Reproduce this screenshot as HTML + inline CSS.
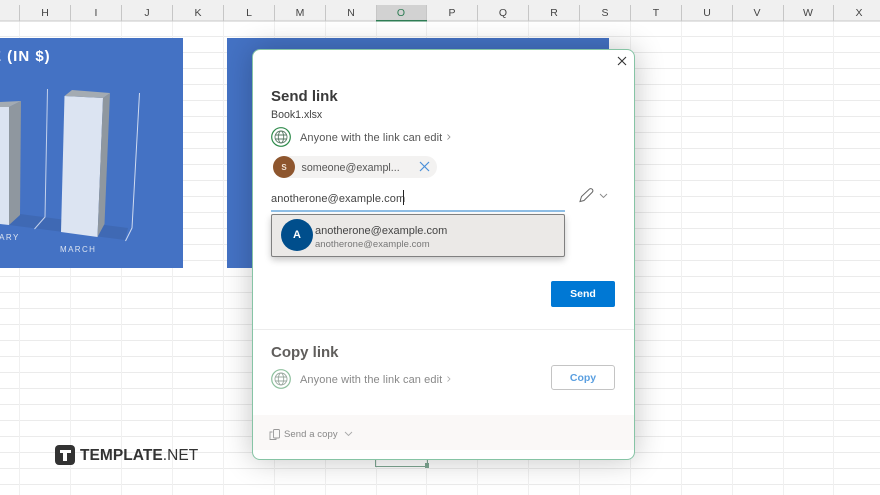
<!DOCTYPE html>
<html><head><meta charset="utf-8"><style>
html,body{margin:0;padding:0;background:#fff}
#p{position:relative;width:880px;height:495px;overflow:hidden;background:#fff;font-family:"Liberation Sans",sans-serif;filter:blur(.35px)}
.a{position:absolute;white-space:nowrap}
.h{position:absolute;top:5px;height:16px;line-height:17px;font-size:10.5px;color:#444;width:20px;text-align:center}
</style></head><body><div id="p">
<svg class="a" style="left:0;top:0" width="880" height="495">
<rect x="0" y="0" width="880" height="21" fill="#f0f0f0"/>
<rect x="376" y="5" width="51" height="16" fill="#d2d2d2"/>
<g stroke="#ebebeb" stroke-width="1">
<path d="M0 36.500H880M0 52.500H880M0 68.500H880M0 84.500H880M0 100.500H880M0 116.500H880M0 132.500H880M0 148.500H880M0 164.500H880M0 180.500H880M0 196.500H880M0 212.500H880M0 228.500H880M0 244.500H880M0 260.500H880M0 276.500H880M0 292.500H880M0 308.500H880M0 324.500H880M0 340.500H880M0 356.500H880M0 372.500H880M0 388.500H880M0 404.500H880M0 420.500H880M0 436.500H880M0 452.500H880M0 468.500H880M0 484.500H880"/>
</g>
<g stroke="#f0f0f0" stroke-width="1">
<path d="M19.500 21V495M70.500 21V495M121.500 21V495M172.500 21V495M223.500 21V495M274.500 21V495M325.500 21V495M376.500 21V495M426.500 21V495M477.500 21V495M528.500 21V495M579.500 21V495M630.500 21V495M681.500 21V495M732.500 21V495M783.500 21V495M833.500 21V495"/>
</g>
<g stroke="#c6c6c6" stroke-width="1"><path d="M19.500 5V21M70.500 5V21M121.500 5V21M172.500 5V21M223.500 5V21M274.500 5V21M325.500 5V21M376.500 5V21M426.500 5V21M477.500 5V21M528.500 5V21M579.500 5V21M630.500 5V21M681.500 5V21M732.500 5V21M783.500 5V21M833.500 5V21"/></g>
<rect x="0" y="20.500" width="880" height="1" fill="#c8c8c8"/>
<rect x="376" y="20" width="51" height="1.500" fill="#2f7d55"/>
<rect x="0" y="38" width="183" height="230" fill="#4472c4"/>
<rect x="227" y="38" width="382" height="230" fill="#4472c4"/>
<path d="M20 214L128 228 125 240 9 225Z" fill="#3f69b4"/>
<path d="M0 106H9V225L0 224Z" fill="#dbe3f1"/>
<path d="M9 107L21 101 20 215 9 225Z" fill="#8f979f"/>
<path d="M0 102L21 101 9 107H0Z" fill="#a4abb2"/>
<path d="M64.500 96L103 98 97.500 237 61 232Z" fill="#dce4f2"/>
<path d="M103 98L110 93 104.500 224 97.500 237Z" fill="#8f979f"/>
<path d="M64.500 96L72 90 110 93 103 98Z" fill="#a4abb2"/>
<path d="M47.500 89L45 217 34.500 229" fill="none" stroke="#c3d1ec" stroke-width="1"/>
<path d="M139.500 93L132 228 125.500 241" fill="none" stroke="#d0dbf0" stroke-width="1"/>
</svg>
<div class="h" style="left:35px">H</div><div class="h" style="left:86px">I</div><div class="h" style="left:137px">J</div><div class="h" style="left:188px">K</div><div class="h" style="left:239px">L</div><div class="h" style="left:290px">M</div><div class="h" style="left:341px">N</div><div class="h" style="left:391px;color:#2f7d55">O</div><div class="h" style="left:442px">P</div><div class="h" style="left:493px">Q</div><div class="h" style="left:544px">R</div><div class="h" style="left:595px">S</div><div class="h" style="left:646px">T</div><div class="h" style="left:697px">U</div><div class="h" style="left:747px">V</div><div class="h" style="left:798px">W</div><div class="h" style="left:849px">X</div>
<div class="a" style="left:-9px;top:48px;font-size:15px;font-weight:bold;color:#fff;letter-spacing:1px">E (IN $)</div>
<div class="a" style="left:-8px;top:233px;font-size:8px;color:#dbe3f1;letter-spacing:1.4px">UARY</div>
<div class="a" style="left:60px;top:244.500px;font-size:8px;color:#dbe3f1;letter-spacing:1.4px">MARCH</div>
<div class="a" style="left:375px;top:440px;width:51px;height:25px;border:1px solid #7ea792"></div>
<div class="a" style="left:425px;top:463px;width:4px;height:5px;background:#7ea792"></div>
<div class="a" style="left:252px;top:49px;width:381px;height:409px;background:#fff;border:1px solid #86c4a5;border-radius:8px;box-shadow:0 0 30px rgba(0,0,0,.24);overflow:hidden">
<div class="a" style="left:0;top:279px;width:381px;height:1px;background:#ececec"></div>
<div class="a" style="left:0;top:365px;width:381px;height:35px;background:#faf8f7"></div>
</div>
<div class="a" style="left:271px;top:88px;font-size:15px;font-weight:bold;color:#3a3a3a;line-height:18px">Send link</div>
<div class="a" style="left:271px;top:108px;font-size:10.600px;color:#444;line-height:14px">Book1.xlsx</div>
<div class="a" style="left:300px;top:130.500px;font-size:11px;color:#555;line-height:14px;letter-spacing:.1px">Anyone with the link can edit</div>
<div class="a" style="left:273px;top:156px;width:164px;height:22px;background:#f3f2f1;border-radius:11px"></div>
<div class="a" style="left:273px;top:156px;width:22px;height:22px;background:#8e562e;border-radius:50%;color:#f3e4d6;font-size:8px;font-weight:bold;line-height:23px;text-align:center">S</div>
<div class="a" style="left:301.500px;top:161px;font-size:10.700px;color:#555;line-height:14px">someone@exampl...</div>
<div class="a" style="left:271px;top:191.500px;font-size:11px;color:#444;line-height:14px;letter-spacing:.09px">anotherone@example.com</div>
<div class="a" style="left:403px;top:190px;width:1px;height:15px;background:#222"></div>
<div class="a" style="left:271px;top:210px;width:294px;height:1.500px;background:#8fbfe6"></div>
<div class="a" style="left:271px;top:214px;width:292px;height:41px;background:#ebe9e7;border:1px solid #808080;border-radius:2px;box-shadow:0 3px 7px rgba(0,0,0,.22)"></div>
<div class="a" style="left:281px;top:219px;width:32px;height:32px;background:#004e8c;border-radius:50%;color:#fff;font-size:11px;font-weight:bold;line-height:33px;text-align:center">A</div>
<div class="a" style="left:315px;top:223.500px;font-size:11px;color:#444;line-height:14px">anotherone@example.com</div>
<div class="a" style="left:315px;top:237.500px;font-size:9.500px;color:#777;line-height:13px;letter-spacing:.02px">anotherone@example.com</div>
<div class="a" style="left:551px;top:281px;width:64px;height:26px;background:#0078d4;border-radius:2px;color:#fff;font-size:10.500px;font-weight:bold;line-height:27px;text-align:center">Send</div>
<div class="a" style="left:271px;top:344px;font-size:15px;font-weight:bold;color:#605e5c;line-height:18px">Copy link</div>
<div class="a" style="left:300px;top:372.500px;font-size:11px;color:#888;line-height:14px;letter-spacing:.1px">Anyone with the link can edit</div>
<div class="a" style="left:551px;top:365px;width:62px;height:23px;background:#fff;border:1px solid #c4c4c4;border-radius:3px;color:#5a9fe0;font-size:10.500px;font-weight:bold;line-height:25px;text-align:center">Copy</div>
<div class="a" style="left:284px;top:428px;font-size:9.500px;color:#888;line-height:13px;letter-spacing:.08px">Send a copy</div>
<div class="a" style="left:55px;top:445px;width:20px;height:20px;background:#333;border-radius:4px"></div>
<div class="a" style="left:59.500px;top:450px;width:11px;height:3px;background:#fff"></div>
<div class="a" style="left:63px;top:450px;width:4px;height:11px;background:#fff"></div>
<div class="a" style="left:80px;top:447px;font-size:15.500px;font-weight:bold;color:#333;line-height:18px;letter-spacing:.05px">TEMPLATE<span style="font-weight:normal">.NET</span></div>
<svg class="a" style="left:0;top:0" width="880" height="495">
<path d="M618 57L626 65M626 57L618 65" stroke="#333" stroke-width="1.100"/>
<circle cx="281" cy="137" r="9.300" fill="none" stroke="#2d8a4a" stroke-width="1.200"/>
<g fill="none" stroke="#5a7a66" stroke-width=".9"><circle cx="281" cy="137" r="6"/><ellipse cx="281" cy="137" rx="2.700" ry="6"/><path d="M275 135H287M275 139H287"/></g>
<path d="M447.500 134.500L450 137 447.500 139.500" fill="none" stroke="#888" stroke-width=".8"/>
<path d="M420 162L429 171M429 162L420 171" stroke="#4a90d9" stroke-width="1.200"/>
<path d="M580 201.500L581.500 196.500 589.500 189Q591 188 592.500 189.500 593.500 191 592 192.500L584 200.500Z" fill="none" stroke="#666" stroke-width="1"/>
<path d="M600 194L603.500 197.500 607 194" fill="none" stroke="#888" stroke-width=".9"/>
<circle cx="281" cy="379" r="9.300" fill="none" stroke="#8cbf9c" stroke-width="1.200"/>
<g fill="none" stroke="#9aa89f" stroke-width=".9"><circle cx="281" cy="379" r="6"/><ellipse cx="281" cy="379" rx="2.700" ry="6"/><path d="M275 377H287M275 381H287"/></g>
<path d="M447.500 376.500L450 379 447.500 381.500" fill="none" stroke="#aaa" stroke-width=".8"/>
<g fill="none" stroke="#999" stroke-width=".9"><rect x="273.500" y="429.500" width="6" height="8.500" rx="1"/><path d="M272.500 432H270V439.500H276V438.500"/></g>
<path d="M345 432L348.500 435.500 352 432" fill="none" stroke="#aaa" stroke-width=".9"/>
</svg>
</div></body></html>
